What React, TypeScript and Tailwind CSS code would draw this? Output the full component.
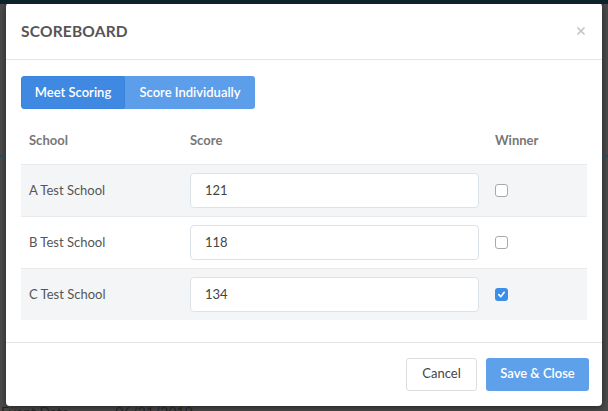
import { X } from 'lucide-react'

type Row = { school: string; score: string; winner: boolean }

const rows: Row[] = [
  { school: 'A Test School', score: '121', winner: false },
  { school: 'B Test School', score: '118', winner: false },
  { school: 'C Test School', score: '134', winner: true },
]

function Checkbox({ checked }: { checked: boolean }) {
  if (checked) {
    return (
      <div className="w-[13px] h-[13px] rounded-[3px] bg-[#3b8eea] flex items-center justify-center">
        <svg width="9" height="9" viewBox="0 0 10 10" fill="none">
          <path d="M2 5.2 L4.2 7.4 L8 2.6" stroke="white" strokeWidth="1.8" strokeLinecap="round" strokeLinejoin="round" />
        </svg>
      </div>
    )
  }
  return <div className="w-[13px] h-[13px] rounded-[3px] border border-[#a9a9a9] bg-white" />
}

export default function App() {
  return (
    <div
      className="relative w-[608px] h-[411px] overflow-hidden bg-[#4a4a4a]"
      style={{ fontFamily: 'Lato, "Open Sans", sans-serif' }}
    >
      {/* dimmed page behind the modal */}
      <div className="absolute inset-x-0 top-0 h-[4px] bg-[#0d222b]" />
      <div className="absolute left-0 top-[155px] w-[6px] h-[2px] bg-[#1f4a66]" />
      <div className="absolute right-0 top-[155px] w-[6px] h-[2px] bg-[#1f4a66]" />
      <div className="absolute left-0 bottom-0 flex items-end h-[6px] text-[#222] text-[14px] leading-none gap-[40px] pl-[1px]">
        <span className="translate-y-[8px]">Event Date</span>
        <span className="translate-y-[8px] pl-[6px]">06/21/2019</span>
      </div>

      <div className="pt-[3px] pl-[6px]">
        <div className="w-[596px] h-[403px] bg-white rounded-[4px] flex flex-col shadow-[0_2px_6px_rgba(0,0,0,0.5)]">
          {/* header */}
          <div className="h-[57px] flex items-center justify-between pl-[15px] pr-[15px] border-b border-[#e5e5e5]">
            <h2 className="text-[15.5px] font-bold text-[#555] tracking-[0.2px] pt-[1px]">SCOREBOARD</h2>
            <X size={12} strokeWidth={3.5} className="text-[#c4c4c4]" />
          </div>

          {/* body */}
          <div className="px-[15px] pt-[16px] flex-1">
            <div className="flex h-[33px] text-[13px] text-white font-semibold">
              <button className="w-[104px] bg-[#3f89e3] rounded-l-[3px] border border-[#3a84de]">Meet Scoring</button>
              <button className="w-[130px] bg-[#5c9eea] rounded-r-[3px]">Score Individually</button>
            </div>

            <div className="mt-[8px]">
              <div className="h-[47px] flex items-center text-[13px] font-bold text-[#777]">
                <div className="w-[169px] pl-[8px]">School</div>
                <div className="w-[305px]">Score</div>
                <div>Winner</div>
              </div>
              {rows.map((r, i) => (
                <div
                  key={r.school}
                  className={`h-[52px] flex items-center border-t border-[#e8eaec] text-[13px] text-[#555] ${i % 2 === 0 ? 'bg-[#f4f5f7]' : 'bg-white'}`}
                >
                  <div className="w-[169px] pl-[8px]">{r.school}</div>
                  <div className="w-[305px]">
                    <div className="w-[289px] h-[35px] bg-white border border-[#dbe3e8] rounded-[4px] flex items-center pl-[14px] text-[#444]">
                      {r.score}
                    </div>
                  </div>
                  <Checkbox checked={r.winner} />
                </div>
              ))}
            </div>
          </div>

          {/* footer */}
          <div className="h-[64px] border-t border-[#e5e5e5] flex items-center justify-end gap-[9px] pr-[13px] pb-[1px]">
            <button className="w-[71px] h-[33px] border border-[#ddd] rounded-[3px] text-[13px] text-[#444] bg-white">
              Cancel
            </button>
            <button className="w-[103px] h-[33px] rounded-[3px] text-[13px] text-white font-semibold bg-[#5ea0ea]">
              Save &amp; Close
            </button>
          </div>
        </div>
      </div>
    </div>
  )
}
